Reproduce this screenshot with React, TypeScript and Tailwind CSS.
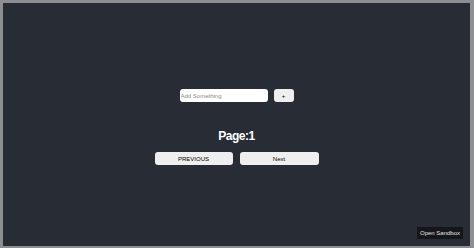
import { useState } from "react";

export default function App() {
  const [page, setPage] = useState(1);
  const [text, setText] = useState("");

  return (
    <div className="relative h-[248px] w-[474px] overflow-hidden border-t-[3px] border-l-[3px] border-r-[4px] border-b-[2px] border-[#8d8f93] bg-[#282c34] font-['Liberation_Sans',Arial,sans-serif]">
      <div className="flex flex-col items-center pt-[86px]">
        <div className="flex items-center gap-[6px]">
          <input
            value={text}
            onChange={(e) => setText(e.target.value)}
            placeholder="Add Something"
            className="h-[13px] w-[88px] rounded-[3px] bg-white px-[1px] text-[6px] text-black outline-none placeholder:text-[#8a8a8a]"
          />
          <button className="h-[13px] w-[20px] rounded-[3px] bg-[#efefef] text-[6px] leading-none text-black">
            +
          </button>
        </div>

        <h2 className="mt-[27px] text-[12px] font-bold leading-[14px] tracking-[-0.5px] text-white">
          Page:{page}
        </h2>

        <div className="mt-[9px] flex gap-[7px]">
          <button
            onClick={() => setPage((p) => Math.max(1, p - 1))}
            className="h-[13px] w-[78px] rounded-[3px] bg-[#efefef] text-[6px] leading-none text-black"
          >
            PREVIOUS
          </button>
          <button
            onClick={() => setPage((p) => p + 1)}
            className="h-[13px] w-[79px] rounded-[3px] bg-[#efefef] text-[6px] leading-none text-black"
          >
            Next
          </button>
        </div>
      </div>

      <div className="absolute bottom-[7px] right-[7px] flex h-[12px] items-center bg-[#151619] px-[3px] text-[6px] text-[#e5e5e5]">
        Open Sandbox
      </div>
    </div>
  );
}
